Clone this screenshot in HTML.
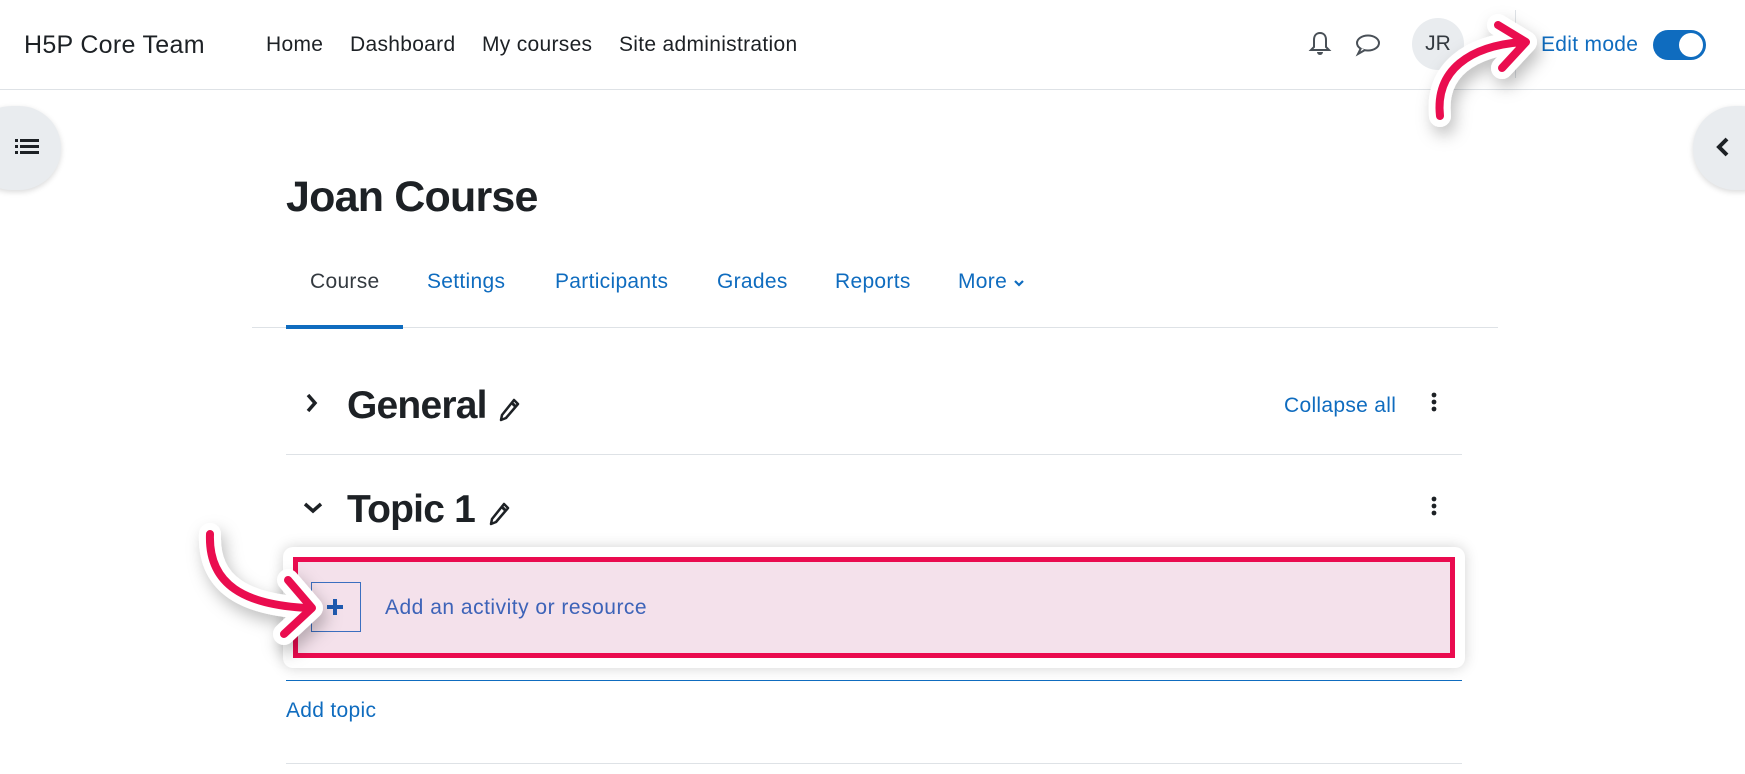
<!DOCTYPE html>
<html><head><meta charset="utf-8"><style>
*{margin:0;padding:0;box-sizing:border-box}
body{width:1745px;height:774px;background:#fff;font-family:"Liberation Sans",sans-serif;position:relative;overflow:hidden;color:#1d2125}
.a{position:absolute;white-space:nowrap}
.blue{color:#0f6cbf}
.n{font-size:21px;letter-spacing:0.3px}
</style></head><body>
<div class="a" style="left:0;top:89px;width:1745px;height:1px;background:#dee2e6"></div>
<div class="a" style="left:24px;top:31px;font-size:25px;letter-spacing:0.3px">H5P Core Team</div>
<div class="a n" style="left:266px;top:33px">Home</div>
<div class="a n" style="left:350px;top:33px">Dashboard</div>
<div class="a n" style="left:482px;top:33px">My courses</div>
<div class="a n" style="left:619px;top:33px">Site administration</div>
<svg class="a" style="left:1308px;top:30px" width="24" height="28" viewBox="0 0 24 28"><path d="M12 3c-4 0-6 3-6 7v7l-3 3h18l-3-3v-7c0-4-2-7-6-7z" fill="none" stroke="#495057" stroke-width="2"/><path d="M9 22a3 3 0 0 0 6 0z" fill="#495057"/></svg>
<svg class="a" style="left:1354px;top:33px" width="28" height="24" viewBox="0 0 28 24"><ellipse cx="14" cy="10" rx="11" ry="7.5" fill="none" stroke="#495057" stroke-width="2"/><path d="M7 15l-3 6 7-4" fill="#fff" stroke="#495057" stroke-width="2"/></svg>
<div class="a" style="left:1412px;top:18px;width:52px;height:52px;border-radius:50%;background:#e9ecef;font-size:21px;line-height:52px;text-align:center;color:#343a40">JR</div>
<div class="a" style="left:1515px;top:10px;width:1px;height:68px;background:#dee2e6"></div>
<div class="a blue n" style="left:1541px;top:33px">Edit mode</div>
<div class="a" style="left:1653px;top:30px;width:53px;height:30px;border-radius:15px;background:#0f6cbf"><div style="position:absolute;right:3px;top:3px;width:24px;height:24px;border-radius:50%;background:#fff"></div></div>
<div class="a" style="left:-30px;top:106px;width:91px;height:84px;border-radius:42px;background:#e9ecef;box-shadow:0 2px 6px rgba(0,0,0,.15)"></div>
<svg class="a" style="left:15px;top:138px" width="24" height="18" viewBox="0 0 24 18"><g fill="#1d2125"><rect x="0" y="1" width="3" height="3"/><rect x="5" y="1" width="19" height="3"/><rect x="0" y="7" width="3" height="3"/><rect x="5" y="7" width="19" height="3"/><rect x="0" y="13" width="3" height="3"/><rect x="5" y="13" width="19" height="3"/></g></svg>
<div class="a" style="left:1693px;top:106px;width:90px;height:84px;border-radius:42px;background:#e9ecef;box-shadow:0 2px 6px rgba(0,0,0,.15)"></div>
<svg class="a" style="left:1715px;top:136px" width="16" height="22" viewBox="0 0 16 22"><path d="M12 3L4 11l8 8" fill="none" stroke="#1d2125" stroke-width="4"/></svg>
<div class="a" style="left:286px;top:173px;font-size:43px;font-weight:bold;letter-spacing:-0.8px">Joan Course</div>
<div class="a n" style="left:310px;top:270px;color:#343a40">Course</div>
<div class="a blue n" style="left:427px;top:270px">Settings</div>
<div class="a blue n" style="left:555px;top:270px">Participants</div>
<div class="a blue n" style="left:717px;top:270px">Grades</div>
<div class="a blue n" style="left:835px;top:270px">Reports</div>
<div class="a blue n" style="left:958px;top:270px">More <svg width="12" height="10" viewBox="0 0 12 10"><path d="M2 3l4 4 4-4" fill="none" stroke="#0f6cbf" stroke-width="2.2"/></svg></div>
<div class="a" style="left:252px;top:327px;width:1246px;height:1px;background:#dee2e6"></div>
<div class="a" style="left:286px;top:325px;width:117px;height:4px;background:#0f6cbf"></div>
<svg class="a" style="left:304px;top:392px" width="16" height="22" viewBox="0 0 16 22"><path d="M4 3l7 8-7 8" fill="none" stroke="#1d2125" stroke-width="3.5"/></svg>
<div class="a" style="left:347px;top:384px;font-size:39px;font-weight:bold;letter-spacing:-0.8px">General</div>
<svg class="a" style="left:498px;top:398px" width="22" height="24" viewBox="0 0 22 24"><path d="M16 2l4 4L8 20l-5 2 1-5z" fill="none" stroke="#1d2125" stroke-width="2.5" stroke-linejoin="round"/><path d="M14 5l3 3" stroke="#1d2125" stroke-width="3"/></svg>
<div class="a blue n" style="left:1284px;top:394px">Collapse all</div>
<svg class="a" style="left:1430px;top:391px" width="8" height="22"><circle cx="4" cy="4" r="2.4" fill="#1d2125"/><circle cx="4" cy="11" r="2.4" fill="#1d2125"/><circle cx="4" cy="18" r="2.4" fill="#1d2125"/></svg>
<div class="a" style="left:286px;top:454px;width:1176px;height:1px;background:#dee2e6"></div>
<svg class="a" style="left:302px;top:500px" width="22" height="16" viewBox="0 0 22 16"><path d="M3 4l8 7 8-7" fill="none" stroke="#1d2125" stroke-width="3.5"/></svg>
<div class="a" style="left:347px;top:488px;font-size:39px;font-weight:bold;letter-spacing:-0.8px">Topic 1</div>
<svg class="a" style="left:488px;top:502px" width="22" height="24" viewBox="0 0 22 24"><path d="M16 2l4 4L8 20l-5 2 1-5z" fill="none" stroke="#1d2125" stroke-width="2.5" stroke-linejoin="round"/><path d="M14 5l3 3" stroke="#1d2125" stroke-width="3"/></svg>
<svg class="a" style="left:1430px;top:495px" width="8" height="22"><circle cx="4" cy="4" r="2.4" fill="#1d2125"/><circle cx="4" cy="11" r="2.4" fill="#1d2125"/><circle cx="4" cy="18" r="2.4" fill="#1d2125"/></svg>
<div class="a" style="left:283px;top:547px;width:1182px;height:121px;background:#fff;border-radius:10px;box-shadow:0 0 14px rgba(0,0,0,.18)"></div>
<div class="a" style="left:293px;top:557px;width:1162px;height:101px;background:#f4e1eb;border:5px solid #ea0b4f"></div>
<div class="a" style="left:311px;top:582px;width:50px;height:50px;border:1px solid #3b6fc0"></div>
<svg class="a" style="left:322px;top:594px" width="26" height="26" viewBox="0 0 26 26"><path d="M13 5v16M5 13h16" stroke="#1f5ab0" stroke-width="4"/></svg>
<div class="a" style="left:385px;top:596px;font-size:21px;letter-spacing:0.5px;color:#3d63b8">Add an activity or resource</div>
<div class="a" style="left:286px;top:680px;width:1176px;height:1px;background:#0f6cbf"></div>
<div class="a blue n" style="left:286px;top:699px">Add topic</div>
<div class="a" style="left:286px;top:763px;width:1176px;height:1px;background:#dee2e6"></div>
<svg class="a" style="left:0;top:0" width="1745" height="774">
<defs><filter id="sh"><feDropShadow dx="4" dy="8" stdDeviation="8" flood-color="#000" flood-opacity="0.25"/></filter></defs>
<g filter="url(#sh)" fill="none" stroke-linecap="round" stroke-linejoin="round">
<path d="M1440 116C1435 70 1470 46 1522 42M1498 25L1526 42L1502 68" stroke="#fff" stroke-width="22"/>
<path d="M1440 116C1435 70 1470 46 1522 42M1498 25L1526 42L1502 68" stroke="#ea0b4f" stroke-width="8"/>
<path d="M210 534C208 585 245 605 308 608M288 580L312 608L284 634" stroke="#fff" stroke-width="22"/>
<path d="M210 534C208 585 245 605 308 608M288 580L312 608L284 634" stroke="#ea0b4f" stroke-width="8"/>
</g></svg>
</body></html>
